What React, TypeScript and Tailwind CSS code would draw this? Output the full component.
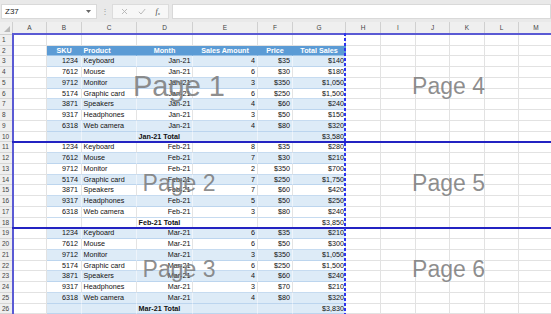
import React from "react";

type RowKind = "empty" | "header" | "data" | "total";
type Row = { kind: RowKind; blue?: boolean; cells?: string[] };

const COLW = [
  "w-[34px]",
  "w-[35px]",
  "w-[55px]",
  "w-[56px]",
  "w-[65px]",
  "w-[35px]",
  "w-[53px]",
  "w-[35px]",
  "w-[35px]",
  "w-[34px]",
  "w-[35px]",
  "w-[34px]",
  "w-[35px]",
];
const LETTERS = ["A", "B", "C", "D", "E", "F", "G", "H", "I", "J", "K", "L", "M"];
const HEIGHTS = ["h-[11px]", "h-[10px]", "h-[11px]", "h-[11px]"];

const jan = [
  ["1234", "Keyboard", "Jan-21", "4", "$35", "$140"],
  ["7612", "Mouse", "Jan-21", "6", "$30", "$180"],
  ["9712", "Monitor", "Jan-21", "3", "$350", "$1,050"],
  ["5174", "Graphic card", "Jan-21", "6", "$250", "$1,500"],
  ["3871", "Speakers", "Jan-21", "4", "$60", "$240"],
  ["9317", "Headphones", "Jan-21", "3", "$50", "$150"],
  ["6318", "Web camera", "Jan-21", "4", "$80", "$320"],
];
const feb = [
  ["1234", "Keyboard", "Feb-21", "8", "$35", "$280"],
  ["7612", "Mouse", "Feb-21", "7", "$30", "$210"],
  ["9712", "Monitor", "Feb-21", "2", "$350", "$700"],
  ["5174", "Graphic card", "Feb-21", "7", "$250", "$1,750"],
  ["3871", "Speakers", "Feb-21", "7", "$60", "$420"],
  ["9317", "Headphones", "Feb-21", "5", "$50", "$250"],
  ["6318", "Web camera", "Feb-21", "3", "$80", "$240"],
];
const mar = [
  ["1234", "Keyboard", "Mar-21", "6", "$35", "$210"],
  ["7612", "Mouse", "Mar-21", "6", "$50", "$300"],
  ["9712", "Monitor", "Mar-21", "3", "$350", "$1,050"],
  ["5174", "Graphic card", "Mar-21", "6", "$250", "$1,500"],
  ["3871", "Speakers", "Mar-21", "4", "$60", "$240"],
  ["9317", "Headphones", "Mar-21", "3", "$70", "$210"],
  ["6318", "Web camera", "Mar-21", "4", "$80", "$320"],
];

const rows: Row[] = [
  { kind: "empty" },
  { kind: "header", cells: ["SKU", "Product", "Month", "Sales Amount", "Price", "Total Sales"] },
  ...jan.map((c, i) => ({ kind: "data" as RowKind, blue: i % 2 === 0, cells: c })),
  { kind: "total", blue: true, cells: ["", "", "Jan-21 Total", "", "", "$3,580"] },
  ...feb.map((c, i) => ({ kind: "data" as RowKind, blue: i % 2 === 1, cells: c })),
  { kind: "total", blue: false, cells: ["", "", "Feb-21 Total", "", "", "$3,850"] },
  ...mar.map((c, i) => ({ kind: "data" as RowKind, blue: i % 2 === 0, cells: c })),
  { kind: "total", blue: true, cells: ["", "", "Mar-21 Total", "", "", "$3,830"] },
];

// alignment per table column B..G
const ALIGN = [
  "justify-end pr-[3px]",
  "justify-start pl-[1.5px]",
  "justify-end pr-[1.5px]",
  "justify-end pr-[2px]",
  "justify-end pr-[2px]",
  "justify-end pr-[1px]",
];
const HALIGN = [
  "justify-center",
  "justify-start pl-[1.5px]",
  "justify-center",
  "justify-center",
  "justify-center",
  "justify-center",
];

function SheetRow({ row, idx }: { row: Row; idx: number }) {
  const h = HEIGHTS[idx % 4];
  const base =
    "shrink-0 flex items-center overflow-hidden whitespace-nowrap border-r border-b leading-none";
  return (
    <div className={`flex ${h}`}>
      <div className="w-[13px] shrink-0 bg-[#efefef] border-r border-b border-[#d6d6d6] flex items-center pl-[2px] text-[6.5px] text-[#444]">
        {idx + 1}
      </div>
      {COLW.map((w, c) => {
        const inTable = c >= 1 && c <= 6 && row.kind !== "empty";
        if (!inTable) {
          return <div key={c} className={`${base} ${w} bg-white border-[#e2e2e2]`} />;
        }
        const t = c - 1;
        const text = row.cells ? row.cells[t] : "";
        if (row.kind === "header") {
          return (
            <div
              key={c}
              className={`${base} ${w} ${HALIGN[t]} bg-[#5b9bd5] border-r-[#5b9bd5] border-b-[#9bc2e6] text-white font-bold`}
            >
              {text}
            </div>
          );
        }
        const colour = row.blue
          ? "bg-[#ddebf7] border-r-[#eef4fb] border-b-[#bcd5ee]"
          : "bg-white border-r-[#e4e4e4] border-b-[#c6dbf0]";
        const bold = row.kind === "total" && t === 2 ? "font-bold" : "";
        const align = row.kind === "total" && t === 2 ? "justify-start pl-[1.5px]" : ALIGN[t];
        return (
          <div key={c} className={`${base} ${w} ${align} ${colour} ${bold} text-[#111]`}>
            {text}
          </div>
        );
      })}
    </div>
  );
}

function Watermark({ cls, size, label }: { cls: string; size: string; label: string }) {
  return (
    <div className={`absolute ${cls} flex items-center justify-center pb-[4px] pointer-events-none`}>
      <span className={`${size} text-[#7a7a7a]/85 leading-none`}>{label}</span>
    </div>
  );
}

export default function App() {
  return (
    <div className="w-[551px] h-[314px] overflow-hidden bg-white font-['Liberation_Sans',Arial,sans-serif] text-[7.2px]">
      {/* Formula bar */}
      <div className="h-[22px] bg-[#e9e9e9] flex items-start pt-[4px] pl-[1px] gap-0">
        <div className="w-[96px] h-[15px] bg-white border border-[#d9d9d9] flex items-center justify-between pl-[3px] pr-[5px]">
          <span className="text-[8px] text-[#222]">Z37</span>
          <svg width="5" height="3" viewBox="0 0 5 3">
            <path d="M0 0 L5 0 L2.5 3 Z" fill="#666" />
          </svg>
        </div>
        <div className="w-[15px] h-[15px] flex items-center justify-center text-[#9a9a9a] text-[8px]">
          ⋮
        </div>
        <div className="w-[57px] h-[15px] bg-[#f7f7f7] border border-[#dcdcdc] flex items-center justify-around px-[3px]">
          <svg width="7" height="7" viewBox="0 0 7 7">
            <path d="M1 1 L6 6 M6 1 L1 6" stroke="#b3b3b3" strokeWidth="0.9" />
          </svg>
          <svg width="8" height="7" viewBox="0 0 8 7">
            <path d="M0.8 3.8 L3 6 L7.2 1" stroke="#b3b3b3" strokeWidth="0.9" fill="none" />
          </svg>
          <span className="text-[8px] italic text-[#444] font-['Liberation_Serif',serif] leading-none">
            f<sub className="text-[5px]">x</sub>
          </span>
        </div>
        <div className="ml-[3px] flex-1 h-[15px] bg-white border border-[#d9d9d9]" />
      </div>

      {/* Sheet */}
      <div className="relative">
        {/* Column headers */}
        <div className="flex h-[13px]">
          <div className="w-[13px] shrink-0 bg-[#efefef] border-r border-b border-[#d0d0d0] relative">
            <svg className="absolute right-[2px] bottom-[2px]" width="6" height="6" viewBox="0 0 6 6">
              <path d="M6 0 L6 6 L0 6 Z" fill="#b8b8b8" />
            </svg>
          </div>
          {COLW.map((w, c) => (
            <div
              key={c}
              className={`${w} shrink-0 bg-[#efefef] border-r border-b border-[#d0d0d0] flex items-center justify-center text-[6.5px] text-[#444] leading-none`}
            >
              {LETTERS[c]}
            </div>
          ))}
        </div>

        {rows.map((r, i) => (
          <SheetRow key={i} row={r} idx={i} />
        ))}

        {/* Page watermarks */}
        <Watermark cls="left-[13px] w-[332px] top-[13px] h-[107px]" size="text-[29px]" label="Page 1" />
        <Watermark cls="left-[13px] w-[332px] top-[120px] h-[86px]" size="text-[23px]" label="Page 2" />
        <Watermark cls="left-[13px] w-[332px] top-[206px] h-[86px]" size="text-[23px]" label="Page 3" />
        <Watermark cls="left-[346px] w-[205px] top-[13px] h-[107px]" size="text-[23px]" label="Page 4" />
        <Watermark cls="left-[346px] w-[205px] top-[120px] h-[86px]" size="text-[23px]" label="Page 5" />
        <Watermark cls="left-[346px] w-[205px] top-[206px] h-[86px]" size="text-[23px]" label="Page 6" />

        {/* Page break lines */}
        <div className="absolute left-[12px] right-0 top-[11px] h-[2px] bg-[#5a5ad4]" />
        <div className="absolute left-[12px] w-[2px] top-[11px] h-[300px] bg-[#5a5ad4]" />
        <div className="absolute left-[12px] right-0 top-[119px] h-[2px] bg-[#2323c2]" />
        <div className="absolute left-[12px] right-0 top-[205px] h-[2px] bg-[#2323c2]" />
        <div className="absolute left-[344px] w-[2px] top-[11px] h-[300px] bg-[repeating-linear-gradient(to_bottom,#2f35ee_0px,#2f35ee_3px,transparent_3px,transparent_5px)]" />
      </div>
    </div>
  );
}
